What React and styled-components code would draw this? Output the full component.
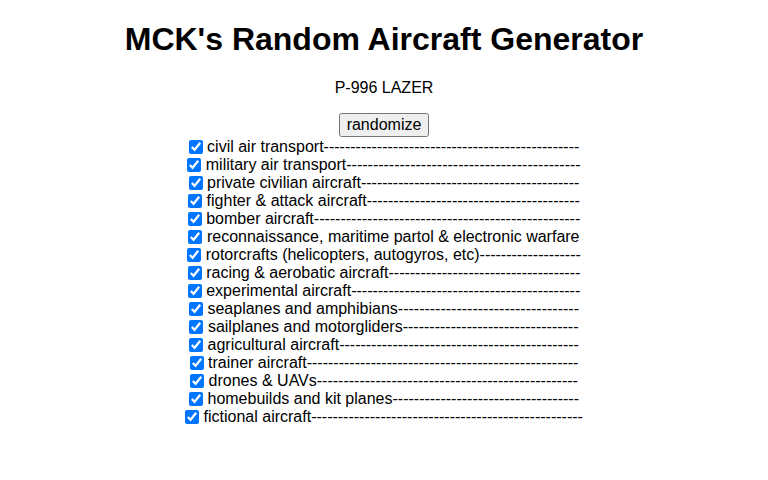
import React, { useState } from 'react'
import styled, { createGlobalStyle } from 'styled-components'

const GlobalStyle = createGlobalStyle`
  body {
    margin: 0;
    font-family: "Liberation Sans", Arial, sans-serif;
    color: #000;
    background: #fff;
  }
`

const categories = [
  ['civil air transport', 48],
  ['military air transport', 44],
  ['private civilian aircraft', 41],
  ['fighter & attack aircraft', 40],
  ['bomber aircraft', 50],
  ['reconnaissance, maritime partol & electronic warfare', 0],
  ['rotorcrafts (helicopters, autogyros, etc)', 19],
  ['racing & aerobatic aircraft', 36],
  ['experimental aircraft', 43],
  ['seaplanes and amphibians', 34],
  ['sailplanes and motorgliders', 33],
  ['agricultural aircraft', 45],
  ['trainer aircraft', 51],
  ['drones & UAVs', 49],
  ['homebuilds and kit planes', 35],
  ['fictional aircraft', 51],
]

const App = () => {
  const [checked, setChecked] = useState(categories.map(() => true))

  return (
    <Page>
      <GlobalStyle />
      <Title>MCK's Random Aircraft Generator</Title>
      <Current>P-996 LAZER</Current>
      <Controls>
        <RandomButton>randomize</RandomButton>
      </Controls>
      <CategoryList>
        {categories.map(([name, dashes], i) => (
          <CategoryRow key={i}>
            <input
              type='checkbox'
              checked={checked[i]}
              onChange={() => setChecked(c => c.map((v, j) => (j === i ? !v : v)))}
            />
            {' ' + name + '-'.repeat(dashes)}
          </CategoryRow>
        ))}
      </CategoryList>
    </Page>
  )
}

export default App

const Page = styled.main`
  padding: 0 8px;
  text-align: center;
`

const Title = styled.h1`
  font-size: 32px;
  font-weight: bold;
  margin: 0;
  padding: 21px 0;
`

const Current = styled.p`
  font-size: 16px;
  margin: 0;
  padding: 0 0 16px;
`

const Controls = styled.div`
  height: 24px;
`

const RandomButton = styled.button`
  font-family: "Liberation Sans", Arial, sans-serif;
  font-size: 16px;
  padding: 1px 6px;
`

const CategoryList = styled.div`
  display: flex;
  flex-direction: column;
  align-items: center;
`

const CategoryRow = styled.label`
  display: block;
  height: 18px;
  line-height: 18px;
  font-size: 16px;
  white-space: nowrap;
  padding-right: 4px;

  input {
    width: 14px;
    height: 14px;
    margin: 3px 0 3px 4px;
    vertical-align: -2px;
  }
`
